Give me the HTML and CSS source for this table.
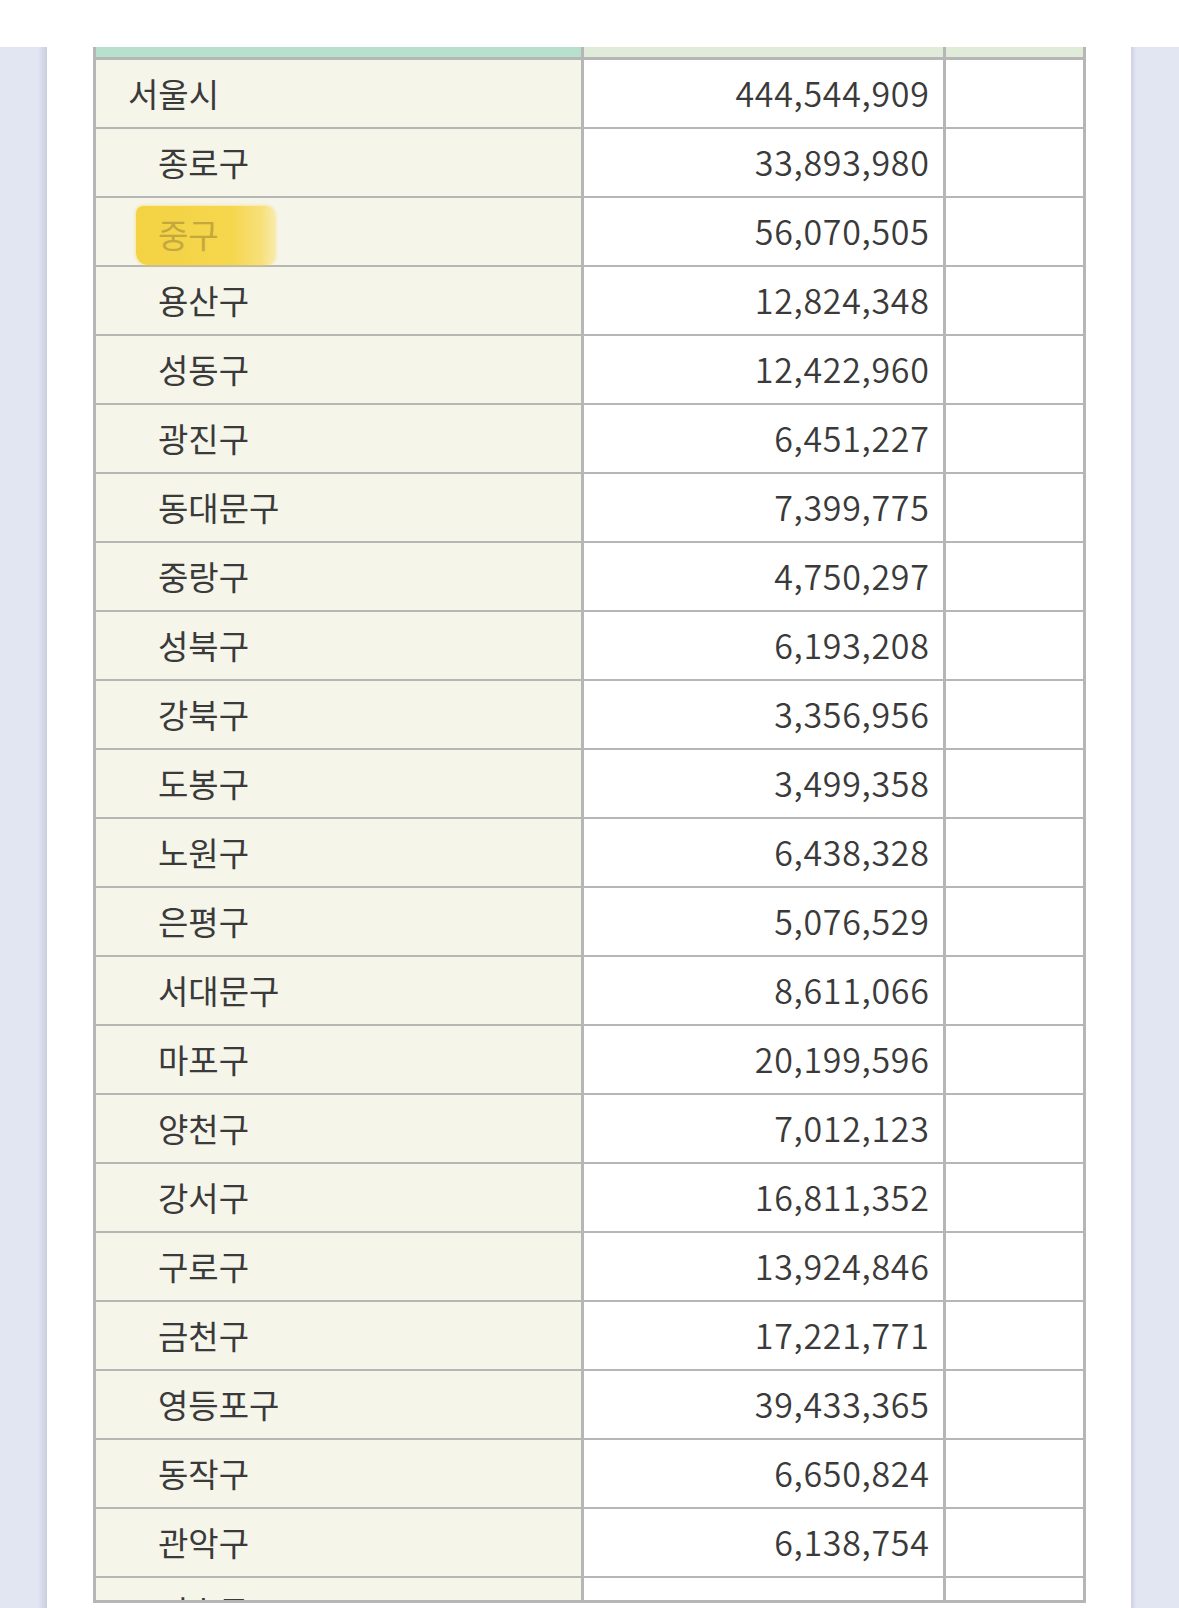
FILE: index.html
```html
<!DOCTYPE html>
<html lang="ko">
<head>
  <meta charset="UTF-8" />
  <meta name="viewport" content="width=device-width, initial-scale=1.0"/>
  <title>서울시 구별 현황</title>
  <link rel="stylesheet" href="styles.css">
</head>
<body>
  <div class="topbar"></div>
  <div class="layout">
    <aside class="side side-left"></aside>
    <main class="page">
      <div class="table-wrap">
        <table class="stats">
          <thead>
            <tr><th class="col-name"></th><th class="col-num"></th><th class="col-extra"></th></tr>
          </thead>
          <tbody>
            <tr><td class="name">서울시</td><td class="num">444,544,909</td><td></td></tr>
            <tr><td class="name sub">종로구</td><td class="num">33,893,980</td><td></td></tr>
            <tr><td class="name sub marked"><span class="marker">중구</span></td><td class="num">56,070,505</td><td></td></tr>
            <tr><td class="name sub">용산구</td><td class="num">12,824,348</td><td></td></tr>
            <tr><td class="name sub">성동구</td><td class="num">12,422,960</td><td></td></tr>
            <tr><td class="name sub">광진구</td><td class="num">6,451,227</td><td></td></tr>
            <tr><td class="name sub">동대문구</td><td class="num">7,399,775</td><td></td></tr>
            <tr><td class="name sub">중랑구</td><td class="num">4,750,297</td><td></td></tr>
            <tr><td class="name sub">성북구</td><td class="num">6,193,208</td><td></td></tr>
            <tr><td class="name sub">강북구</td><td class="num">3,356,956</td><td></td></tr>
            <tr><td class="name sub">도봉구</td><td class="num">3,499,358</td><td></td></tr>
            <tr><td class="name sub">노원구</td><td class="num">6,438,328</td><td></td></tr>
            <tr><td class="name sub">은평구</td><td class="num">5,076,529</td><td></td></tr>
            <tr><td class="name sub">서대문구</td><td class="num">8,611,066</td><td></td></tr>
            <tr><td class="name sub">마포구</td><td class="num">20,199,596</td><td></td></tr>
            <tr><td class="name sub">양천구</td><td class="num">7,012,123</td><td></td></tr>
            <tr><td class="name sub">강서구</td><td class="num">16,811,352</td><td></td></tr>
            <tr><td class="name sub">구로구</td><td class="num">13,924,846</td><td></td></tr>
            <tr><td class="name sub">금천구</td><td class="num">17,221,771</td><td></td></tr>
            <tr><td class="name sub">영등포구</td><td class="num">39,433,365</td><td></td></tr>
            <tr><td class="name sub">동작구</td><td class="num">6,650,824</td><td></td></tr>
            <tr><td class="name sub">관악구</td><td class="num">6,138,754</td><td></td></tr>
            <tr><td class="name sub">서초구</td><td class="num"></td><td></td></tr>
          </tbody>
        </table>
      </div>
    </main>
    <aside class="side side-right"></aside>
  </div>
</body>
</html>
```

FILE: styles.css
```css
* { box-sizing: border-box; }

html, body {
  margin: 0;
  padding: 0;
}

body {
  font-family: "Noto Sans CJK KR", "Noto Sans", sans-serif;
  background: #fff;
  color: #3a3a3a;
  width: 1179px;
  height: 1608px;
  overflow: hidden;
}

.topbar {
  height: 47px;
  background: #fff;
}

.layout {
  display: flex;
  height: 1561px;
}

.side {
  width: 47px;
  background: #e2e6f3;
}

.side-left {
  background: linear-gradient(90deg, #e2e6f3 0, #e2e6f3 38px, #d3d8e8 43px, #c9cee0 47px);
}

.side-right {
  width: 48px;
  background: linear-gradient(90deg, #cdd1e2 0, #d8dcec 3px, #e2e6f3 5px, #e2e6f3 100%);
}

.page {
  flex: 1;
  background: #fff;
  padding-left: 46px;
}

.table-wrap {
  width: 993px;
  height: 1556px;
  overflow: hidden;
  border-bottom: 3px solid #b6b6b6;
}

.stats {
  border-collapse: separate;
  border-spacing: 0;
  border-left: 3px solid #b6b6b6;
  table-layout: fixed;
  width: 993px;
}

.stats th {
  height: 13px;
  padding: 0;
  background: #e0ecd9;
  border-right: 3px solid #b6b6b6;
  border-bottom: 3px solid #b6b6b6;
}

.stats th.col-name {
  width: 487px;
  background: #b7e0cd;
}

.stats th.col-num { width: 360px; }
.stats th.col-extra { width: 140px; }

.stats td {
  height: 69px;
  padding: 0 0 1px;
  font-size: 33px;
  line-height: 1;
  background: #fff;
  border-right: 3px solid #b6b6b6;
  border-bottom: 2px solid #b6b6b6;
  white-space: nowrap;
}

.stats td.name {
  background: #f6f5ea;
  padding-left: 32px;
}

.stats td.sub {
  padding-left: 62px;
}

.stats td.marked {
  padding-top: 7px;
  padding-bottom: 0;
}

.stats td.num {
  text-align: right;
  padding-right: 13px;
  font-size: 34px;
  font-weight: 350;
  letter-spacing: 0.7px;
}

.marker {
  display: inline-block;
  margin-left: -22px;
  padding: 12px 56px 14px 22px;
  color: #c4a83e;
  border-radius: 7px 10px 9px 12px;
  background: linear-gradient(90deg, #f3d243 0%, #f6d64c 68%, #f7e07a 90%, #f8eaa8 100%);
  box-shadow: 0 0 3px 1px rgba(244, 212, 71, 0.45);
}
```
